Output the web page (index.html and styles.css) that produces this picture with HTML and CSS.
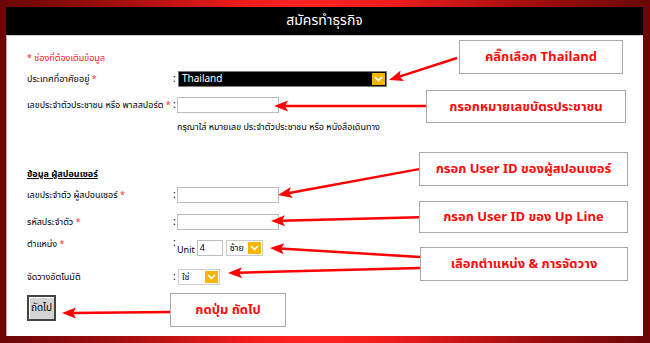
FILE: index.html
```html
<!DOCTYPE html>
<html lang="th">
<head>
  <meta charset="UTF-8">
  <title>สมัครทำธุรกิจ</title>
  <link rel="stylesheet" href="styles.css">
</head>
<body>
  <div class="frame">
    <div class="panel">
      <div class="header">สมัครทำธุรกิจ</div>

      <div class="form">
        <div class="note">* ช่องที่ต้องเติมข้อมูล</div>

        <div class="row row-country">
          <div class="label">ประเทศที่อาศัยอยู่ <span class="req">*</span></div>
          <div class="colon">:</div>
          <div class="select select-dark" style="width: 209px;">
            <span class="select-text">Thailand</span>
            <span class="arrow"><svg width="9" height="6" viewBox="0 0 9 6"><path d="M1 1 L4.5 4.5 L8 1" fill="none" stroke="#fff" stroke-width="1.6"/></svg></span>
          </div>
        </div>

        <div class="row row-id">
          <div class="label">เลขประจำตัวประชาชน หรือ พาสสปอร์ต <span class="req">*</span></div>
          <div class="colon">:</div>
          <input class="text-input" type="text">
        </div>

        <div class="hint">กรุณาใส่ หมายเลข ประจำตัวประชาชน หรือ หนังสือเดินทาง</div>

        <div class="section">ข้อมูล ผู้สปอนเซอร์</div>

        <div class="row row-sponsor">
          <div class="label">เลขประจำตัว ผู้สปอนเซอร์ <span class="req">*</span></div>
          <div class="colon">:</div>
          <input class="text-input" type="text">
        </div>

        <div class="row row-code">
          <div class="label">รหัสประจำตัว <span class="req">*</span></div>
          <div class="colon">:</div>
          <input class="text-input" type="text">
        </div>

        <div class="row row-position">
          <div class="label label-top">ตำแหน่ง <span class="req">*</span></div>
          <div class="colon colon-top">:</div>
          <div class="unit">
            <span class="unit-text">Unit</span>
            <input class="unit-input" type="text" value="4">
            <div class="select select-light select-unit" style="width: 37px;">
              <span class="select-text">ซ้าย</span>
              <span class="arrow"><svg width="9" height="6" viewBox="0 0 9 6"><path d="M1 1 L4.5 4.5 L8 1" fill="none" stroke="#fff" stroke-width="1.6"/></svg></span>
            </div>
          </div>
        </div>

        <div class="row row-auto">
          <div class="label">จัดวางอัตโนมัติ</div>
          <div class="colon">:</div>
          <div class="select select-light" style="width: 42px;">
            <span class="select-text">ใช่</span>
            <span class="arrow"><svg width="9" height="6" viewBox="0 0 9 6"><path d="M1 1 L4.5 4.5 L8 1" fill="none" stroke="#fff" stroke-width="1.6"/></svg></span>
          </div>
        </div>

        <button class="next-btn">ถัดไป</button>
      </div>
    </div>

    <!-- คำอธิบายประกอบ -->
    <div class="callout c1">คลิ๊กเลือก Thailand</div>
    <div class="callout c2">กรอกหมายเลขบัตรประชาชน</div>
    <div class="callout c3">กรอก User ID ของผู้สปอนเซอร์</div>
    <div class="callout c4">กรอก User ID ของ Up Line</div>
    <div class="callout c5">เลือกตำแหน่ง &amp; การจัดวาง</div>
    <div class="callout c6">กดปุ่ม ถัดไป</div>

    <!-- ลูกศร: จุด = ปลายลูกศร, หมุนไปทางกล่องข้อความ -->
    <svg class="arrows" width="650" height="343" viewBox="0 0 650 343">
      <defs>
        <path id="head" d="M0 0 L14 -5.5 L11 0 L14 5.5 Z" fill="#f00"/>
      </defs>
      <g transform="translate(389 80) rotate(-17.9)">
        <line x1="10" y1="0" x2="71.5" y2="0" class="shaft"/><use href="#head"/>
      </g>
      <g transform="translate(274 106)">
        <line x1="10" y1="0" x2="152" y2="0" class="shaft"/><use href="#head"/>
      </g>
      <g transform="translate(278 195) rotate(-10.4)">
        <line x1="10" y1="0" x2="143.4" y2="0" class="shaft"/><use href="#head"/>
      </g>
      <g transform="translate(271 221) rotate(-1.5)">
        <line x1="10" y1="0" x2="148" y2="0" class="shaft"/><use href="#head"/>
      </g>
      <g transform="translate(270 248) rotate(3.4)">
        <line x1="10" y1="0" x2="150.3" y2="0" class="shaft"/><use href="#head"/>
      </g>
      <g transform="translate(228 273) rotate(-1.5)">
        <line x1="10" y1="0" x2="192.1" y2="0" class="shaft"/><use href="#head"/>
      </g>
      <g transform="translate(62 313) rotate(-0.5)">
        <line x1="10" y1="0" x2="108" y2="0" class="shaft"/><use href="#head"/>
      </g>
    </svg>
  </div>
</body>
</html>
```

FILE: styles.css
```css
body {
  margin: 0;
  font-family: Tahoma, "Noto Sans Thai", "Noto Sans", "DejaVu Sans", sans-serif;
}

.frame {
  position: relative;
  width: 650px;
  height: 343px;
  box-sizing: border-box;
  padding: 7px 7px 7px 6px;
  background: linear-gradient(90deg, #6a0707 0%, #a00e0e 18%, #f01c1c 38%, #ff2424 48%, #ef1c1c 60%, #a00e0e 82%, #6a0707 100%);
}

.panel {
  height: 100%;
  background-color: #ffffff;
  box-shadow: inset 1px 0 0 #c9a0a0;
}

.header {
  height: 28px;
  line-height: 28px;
  background-color: #000000;
  color: #ffffff;
  text-align: center;
  font-size: 14px;
  border-bottom: 1px solid #cfcfcf;
}

.form {
  display: flex;
  flex-direction: column;
  padding-left: 21px;
  font-size: 9px;
  color: #000;
}

.note {
  color: #ff2020;
  margin-top: 16px;
  line-height: 12px;
}

.req {
  color: #ff3030;
}

.row {
  display: flex;
  align-items: center;
  height: 16px;
}

.label {
  width: 146px;
  white-space: nowrap;
}

.colon {
  width: 4px;
  font-size: 10px;
}

.row-country { margin-top: 7px; }
.row-id { margin-top: 10px; }
.row-sponsor { margin-top: 7px; }
.row-code { margin-top: 11px; }
.row-position { margin-top: 8px; align-items: flex-start; }
.row-auto { margin-top: 15px; }

.label-top { line-height: 10px; padding-top: 1px; }
.colon-top { line-height: 10px; }

.hint {
  margin-top: 8px;
  margin-left: 150px;
  line-height: 12px;
}

.section {
  margin-top: 35px;
  font-weight: bold;
  text-decoration: underline;
  line-height: 12px;
}

.text-input {
  flex: none;
  width: 102px;
  height: 16px;
  box-sizing: border-box;
  border: 1px solid #bdbdbd;
  margin: 0;
  padding: 0;
}

.select {
  flex: none;
  height: 16px;
  box-sizing: border-box;
  margin-left: 1px;
  display: flex;
  align-items: center;
  justify-content: space-between;
  border: 1px solid #cccccc;
  padding: 1px;
}

.select-dark {
  background-color: #000000;
  border: 1px solid #7a7a7a;
  color: #ffffff;
  font-size: 10px;
}

.select-light {
  background-color: #ffffff;
  color: #000;
}

.select-unit {
  margin-left: 3px;
}

.select-text {
  padding-left: 2px;
}

.arrow {
  width: 13px;
  height: 12px;
  background-color: #f7b500;
  display: flex;
  align-items: center;
  justify-content: center;
}

.unit {
  display: flex;
  align-items: center;
}

.unit-text {
  padding-top: 5px;
}

.unit-input {
  flex: none;
  width: 26px;
  height: 16px;
  box-sizing: border-box;
  border: 1px solid #bdbdbd;
  margin: 0 0 0 2px;
  padding: 0 0 0 2px;
  font-size: 9px;
  font-family: inherit;
}

.next-btn {
  align-self: flex-start;
  margin-top: 10px;
  width: 29px;
  height: 26px;
  padding: 0;
  font-size: 10px;
  font-family: inherit;
  background-color: #d4d4d4;
  border: 2px solid #444;
  box-shadow: inset 1px 1px 0 #fff;
}

.callout {
  position: absolute;
  box-sizing: border-box;
  background-color: #ffffff;
  border: 1px solid #a8a8a8;
  color: #ff0a0a;
  font-weight: bold;
  font-size: 13px;
  display: flex;
  align-items: center;
  justify-content: center;
  white-space: nowrap;
}

.c1 { left: 459px; top: 40px; width: 164px; height: 34px; }
.c2 { left: 426px; top: 90px; width: 200px; height: 33px; }
.c3 { left: 419px; top: 152px; width: 209px; height: 34px; }
.c4 { left: 419px; top: 201px; width: 209px; height: 32px; }
.c5 { left: 420px; top: 247px; width: 208px; height: 34px; }
.c6 { left: 170px; top: 293px; width: 116px; height: 34px; }

.arrows {
  position: absolute;
  left: 0;
  top: 0;
  pointer-events: none;
}

.shaft {
  stroke: #f00;
  stroke-width: 2.5;
}
```
